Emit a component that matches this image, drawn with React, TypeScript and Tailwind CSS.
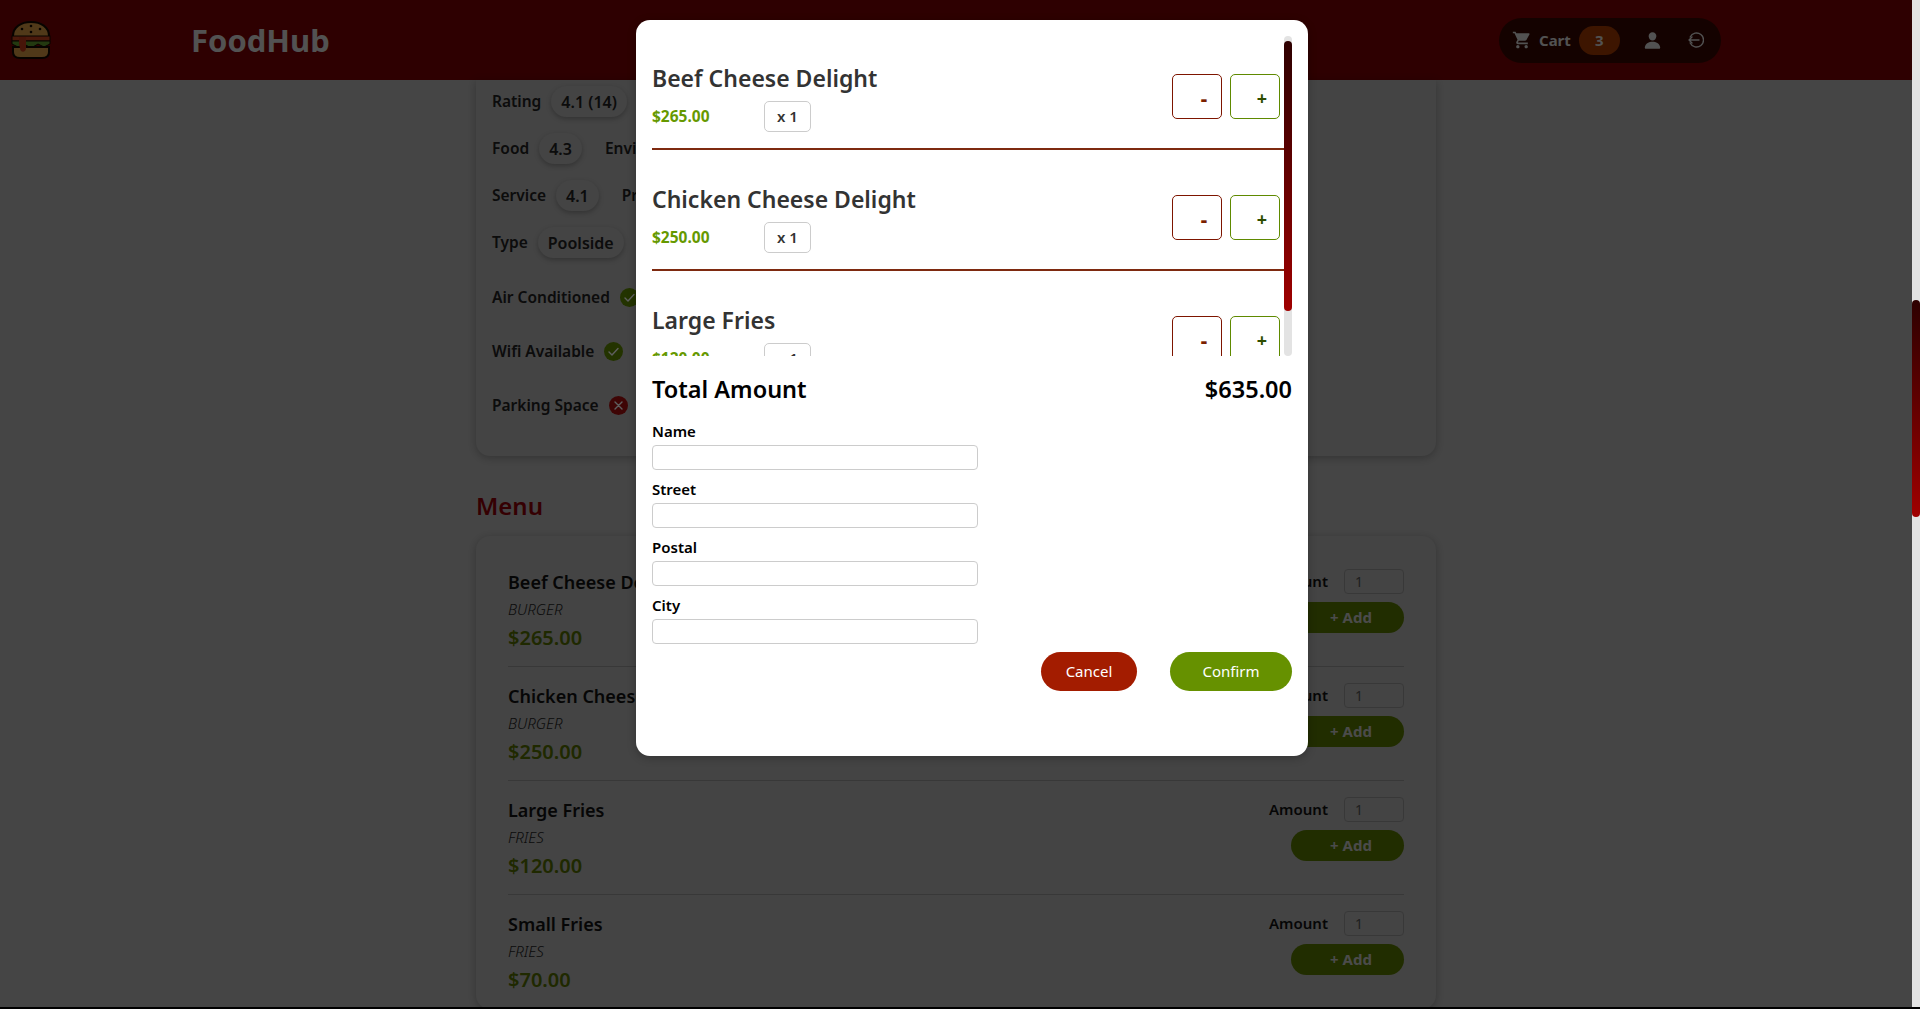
import { MdShoppingCart } from "react-icons/md";
import { IoPerson } from "react-icons/io5";

const ratings = [
  [["Rating", "4.1 (14)"], ["Reviews", "14"]],
  [["Food", "4.3"], ["Environment", "4.0"]],
  [["Service", "4.1"], ["Price", "3.9"]],
  [["Type", "Poolside"]],
];

const features = [
  { label: "Air Conditioned", ok: true },
  { label: "Wifi Available", ok: true },
  { label: "Parking Space", ok: false },
];

const menu = [
  { name: "Beef Cheese Delight", kind: "BURGER", price: "$265.00" },
  { name: "Chicken Cheese Delight", kind: "BURGER", price: "$250.00" },
  { name: "Large Fries", kind: "FRIES", price: "$120.00" },
  { name: "Small Fries", kind: "FRIES", price: "$70.00" },
];

const cart = menu.slice(0, 3);

function BurgerLogo() {
  return (
    <svg viewBox="0 0 42 38" className="w-[42px] h-[38px]">
      <path d="M3 15C3 6 11 1 21 1s18 5 18 14v1H3z" fill="#d99a45" stroke="#140a00" strokeWidth="2" />
      <circle cx="12" cy="8" r="1.3" fill="#140a00" />
      <circle cx="21" cy="5" r="1.3" fill="#140a00" />
      <circle cx="30" cy="8" r="1.3" fill="#140a00" />
      <circle cx="21" cy="11" r="1.3" fill="#140a00" />
      <rect x="2" y="15" width="38" height="5" fill="#c9461f" stroke="#140a00" strokeWidth="1" />
      <path d="M2 20h38v3l-6 3-6-3-7 4-7-4-6 3-6-3z" fill="#5f9a2c" stroke="#140a00" strokeWidth="1" />
      <path d="M3 26h36v5c0 4-3 6-7 6H10c-4 0-7-2-7-6z" fill="#d99a45" stroke="#140a00" strokeWidth="2" />
      <path d="M9 16h7v11c0 5-6 5-6 0l-1-4z" fill="#c23a1a" />
    </svg>
  );
}

function StatusIcon({ ok }: { ok: boolean }) {
  return (
    <svg viewBox="0 0 19 19" className="w-[19px] h-[19px] shrink-0">
      <circle cx="9.5" cy="9.5" r="9.5" fill={ok ? "#5f8a00" : "#a80f0f"} />
      {ok ? (
        <path d="M5 10l3 3 6-6.5" fill="none" stroke="#fff" strokeWidth="1.4" strokeLinecap="round" strokeLinejoin="round" />
      ) : (
        <path d="M6 6l7 7M13 6l-7 7" fill="none" stroke="#fff" strokeWidth="1.4" strokeLinecap="round" />
      )}
    </svg>
  );
}

function Chip({ children }: { children: string }) {
  return (
    <span className="h-[31px] pt-[1px] px-[10px] rounded-full flex items-center text-[16px] bg-[#b8b8b8] text-[#222] shadow-[0_2px_5px_rgba(0,0,0,0.25)]">
      {children}
    </span>
  );
}

function CartRow({ name, price }: { name: string; price: string }) {
  return (
    <div className="h-[114px] shrink-0 mb-[7px] border-b-2 border-[#7e2a10] flex justify-between pr-[4px]">
      <div className="pt-[26px]">
        <h3 className="h-[32px] leading-[32px] text-[23px] font-semibold text-[#333]">{name}</h3>
        <div className="flex items-center mt-[7px]">
          <span className="w-[112px] text-[15.5px] font-bold text-[#669900]">{price}</span>
          <span className="w-[47px] h-[31px] border border-[#ccc] rounded-[5px] flex items-center justify-center text-[15px] font-semibold text-[#333]">
            x 1
          </span>
        </div>
      </div>
      <div className="flex gap-[8px] pt-[38px]">
        <button className="w-[50px] h-[45px] border border-[#7e1500] rounded-[5px] pl-[14px] pt-[4px] text-[20px] text-[#7a2000] font-extrabold bg-white">-</button>
        <button className="w-[50px] h-[45px] border border-[#5f8a00] rounded-[5px] pl-[14px] pt-[4px] text-[18px] text-[#2f4d00] font-bold bg-white">+</button>
      </div>
    </div>
  );
}

function Field({ label }: { label: string }) {
  return (
    <div className="mb-[8px] last:mb-0">
      <label className="block h-[25px] leading-[23px] text-[15px] font-semibold text-black">{label}</label>
      <input className="block w-[326px] h-[25px] border border-[#ccc] rounded-[4px] bg-white" />
    </div>
  );
}

export default function App() {
  return (
    <div className="h-screen overflow-hidden bg-black font-['Noto_Sans','Open_Sans',sans-serif]">
      <div className="h-[1007px] flex">
        <div className="relative w-[1912px] h-full overflow-hidden bg-[#bbbbbb]">
          {/* Header */}
          <header className="h-[80px] bg-[#7c0005] flex items-center pl-[10px] pr-[191px]">
            <BurgerLogo />
            <span className="ml-[139px] text-[31px] font-bold text-[#dddddd]">FoodHub</span>
            <div className="ml-auto h-[45px] w-[222px] rounded-full bg-[#370800] flex items-center pl-[13px] text-[#dddddd]">
              <MdShoppingCart size={20} />
              <span className="ml-[7px] font-bold text-[15px]">Cart</span>
              <span className="ml-[8px] w-[41px] h-[29px] rounded-full bg-[#a53a00] flex items-center justify-center font-bold text-[15px]">3</span>
              <IoPerson size={19} className="ml-[23px]" />
              <svg viewBox="0 0 16 16" className="ml-[26px] w-[16px] h-[16px]" fill="none" stroke="currentColor" strokeWidth="1.4" strokeLinecap="round" strokeLinejoin="round">
                <path d="M2.2 5A7 7 0 1 1 2.2 11" />
                <path d="M11 8H1M4 5L1 8l3 3" />
              </svg>
            </div>
          </header>

          {/* Page content */}
          <main className="w-[960px] mx-auto">
            <section className="bg-[#b8b8b8] rounded-b-[14px] shadow-[0_2px_8px_rgba(0,0,0,0.25)] pt-[6px] pb-[39px] pl-[16px] text-[15.5px] font-semibold text-[#222]">
              <div className="flex flex-col gap-[16px]">
                {ratings.map((row, i) => (
                  <div key={i} className="flex items-center gap-[23px]">
                    {row.map(([label, value]) => (
                      <div key={label} className="flex items-center gap-[10px]">
                        <span className="pt-[1px]">{label}</span>
                        <Chip>{value}</Chip>
                      </div>
                    ))}
                  </div>
                ))}
              </div>
              <div className="mt-[27px] flex flex-col gap-[30px]">
                {features.map((f) => (
                  <div key={f.label} className="h-[24px] flex items-center gap-[10px]">
                    <span className="pt-[2px]">{f.label}</span>
                    <StatusIcon ok={f.ok} />
                  </div>
                ))}
              </div>
            </section>

            <h2 className="mt-[34px] mb-[14px] h-[32px] leading-[32px] text-[24px] font-semibold text-[#900008]">Menu</h2>

            <section className="bg-[#b8b8b8] rounded-[14px] shadow-[0_2px_8px_rgba(0,0,0,0.25)] px-[32px] pt-[33px]">
              {menu.map((item) => (
                <div key={item.name} className="flex justify-between border-b border-[#999] mb-[16px] pb-[15px] h-[82px] box-content">
                  <div>
                    <div className="h-[27px] leading-[27px] text-[18px] font-semibold text-[#111]">{item.name}</div>
                    <div className="h-[24px] leading-[24px] mt-[1px] text-[15px] italic font-light text-[#222]">{item.kind}</div>
                    <div className="h-[30px] leading-[30px] mt-[2px] text-[20px] font-semibold text-[#556f00]">{item.price}</div>
                  </div>
                  <div className="flex flex-col items-end gap-[8px]">
                    <div className="flex items-center gap-[16px]">
                      <span className="text-[15px] font-semibold text-[#111]">Amount</span>
                      <input readOnly value="1" className="w-[60px] h-[25px] border border-[#999] rounded-[4px] px-[10px] text-[14px] text-[#555]" />
                    </div>
                    <button className="w-[113px] h-[31px] rounded-full bg-[#5a7a00] pl-[7px] text-[15px] font-bold text-[#cccccc]">+ Add</button>
                  </div>
                </div>
              ))}
            </section>
          </main>

          {/* Modal backdrop */}
          <div className="absolute inset-0 bg-[rgba(0,0,0,0.63)]" />

          {/* Cart modal */}
          <div className="absolute left-[636px] top-[20px] w-[672px] h-[736px] bg-white rounded-[14px] shadow-[0_2px_8px_rgba(0,0,0,0.25)] pt-[16px] px-[16px]">
            <div className="h-[320px] flex">
              <div className="flex-1 h-full overflow-hidden">
                {cart.map((c) => (
                  <CartRow key={c.name} name={c.name} price={c.price} />
                ))}
              </div>
              <div className="w-[8px] h-full rounded-full bg-[#e3e3e3] pt-[5px]">
                <div className="h-[270px] rounded-full bg-gradient-to-b from-[#2e0000] to-[#a00000]" />
              </div>
            </div>

            <div className="h-[32px] mt-[18px] mb-[14px] flex justify-between items-center text-[23.5px] font-semibold text-black">
              <span>Total Amount</span>
              <span>$635.00</span>
            </div>

            <form>
              <Field label="Name" />
              <Field label="Street" />
              <Field label="Postal" />
              <Field label="City" />
              <div className="flex justify-end gap-[33px] mt-[8px]">
                <button type="button" className="w-[96px] h-[39px] rounded-full bg-[#a31c00] text-[15px] text-white">Cancel</button>
                <button type="button" className="w-[122px] h-[39px] rounded-full bg-[#669100] text-[15px] text-white">Confirm</button>
              </div>
            </form>
          </div>
        </div>

        {/* Page scrollbar */}
        <div className="w-[8px] h-full bg-[#e3e3e3] pt-[300px]">
          <div className="h-[217px] rounded-full bg-gradient-to-b from-[#2e0000] to-[#a00000]" />
        </div>
      </div>
    </div>
  );
}
